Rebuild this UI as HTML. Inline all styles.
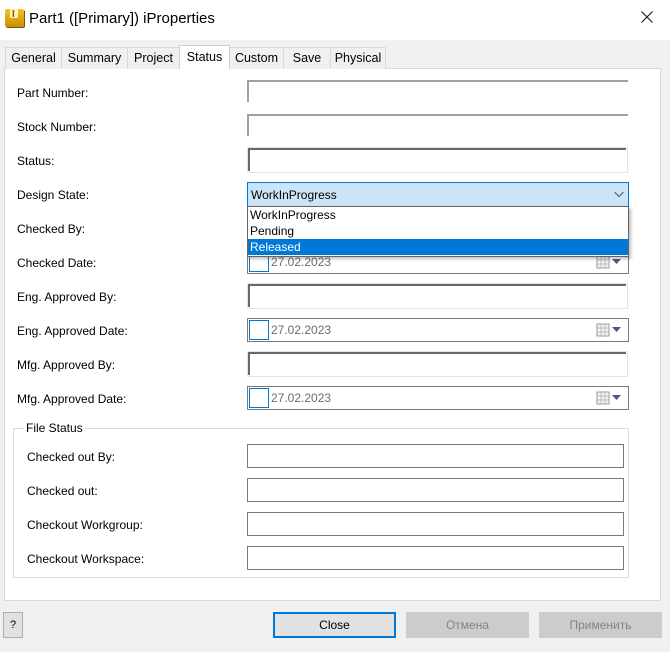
<!DOCTYPE html>
<html><head><meta charset="utf-8"><style>
*{box-sizing:border-box;margin:0;padding:0}
body{width:670px;height:652px;background:#f0f0f0;font-family:"Liberation Sans",sans-serif;font-size:12px;color:#000;position:relative;overflow:hidden}
.a{position:absolute}
.title{left:0;top:0;width:670px;height:40px;background:#fff}
.tab{top:47px;height:22px;border:1px solid #d9d9d9;border-bottom:none;background:#f0f0f0;text-align:center;line-height:21px;font-size:12.5px}
.sel{top:45px;height:24px;background:#fff;border-color:#d0d0d0;z-index:3;line-height:23px}
.panel{left:4px;top:68px;width:657px;height:533px;background:#fff;border:1px solid #d9d9d9}
.lbl{left:17px;font-size:12px}
.tl{left:247px;width:381px;height:22px;border-top:2px solid #a0a0a0;border-left:2px solid #a0a0a0}
.sunk{left:247px;width:381px;height:26px;border:1px solid #e3e3e3;background:#fff}
.sunk::before{content:"";position:absolute;left:0;top:0;right:1px;bottom:1px;border-top:2px solid #696969;border-left:2px solid #696969}
.date{left:247px;width:382px;height:24px;border:1px solid #7a7a7a;background:#fff}
.date .cb{position:absolute;left:1px;top:1px;width:20px;height:20px;border:1px solid #0078d7}
.date .t{position:absolute;left:23px;top:4px;color:#6d6d6d;font-size:12px}
.fs{left:247px;width:377px;height:24px;border:1px solid #7a7a7a;background:#fff}
.btn{top:612px;width:123px;height:26px;text-align:center;line-height:25px;font-size:12px;background:#cccccc;border:1px solid #cccccc;color:#838383}
</style></head><body>
<div class="a title"></div>
<div class="a" style="left:5px;top:9px;width:19px;height:18px;background:linear-gradient(#f2c230,#c89000);border-radius:2px;box-shadow:1px 1px 0 #7a5a00"></div>
<div class="a" style="left:10px;top:9px;width:8px;height:9px;background:#fff2b0;border-radius:1px"></div>
<div class="a" style="left:12px;top:9px;color:#7a5a00;font-weight:bold;font-size:10px">I</div>
<div class="a" style="left:29px;top:10px;font-size:15px">Part1 ([Primary]) iProperties</div>
<svg class="a" style="left:641px;top:11px" width="12" height="12"><path d="M0.5 0.5L11.5 11.5M11.5 0.5L0.5 11.5" stroke="#222" stroke-width="1.2"/></svg>

<div class="a panel"></div>
<div class="a tab" style="left:5px;width:57px">General</div>
<div class="a tab" style="left:61px;width:67px">Summary</div>
<div class="a tab" style="left:127px;width:53px">Project</div>
<div class="a tab sel" style="left:179px;width:51px">Status</div>
<div class="a tab" style="left:229px;width:55px">Custom</div>
<div class="a tab" style="left:283px;width:48px">Save</div>
<div class="a tab" style="left:330px;width:56px">Physical</div>

<div class="a lbl" style="top:86px">Part Number:</div>
<div class="a lbl" style="top:120px">Stock Number:</div>
<div class="a lbl" style="top:154px">Status:</div>
<div class="a lbl" style="top:188px">Design State:</div>
<div class="a lbl" style="top:222px">Checked By:</div>
<div class="a lbl" style="top:256px">Checked Date:</div>
<div class="a lbl" style="top:290px">Eng. Approved By:</div>
<div class="a lbl" style="top:324px">Eng. Approved Date:</div>
<div class="a lbl" style="top:358px">Mfg. Approved By:</div>
<div class="a lbl" style="top:392px">Mfg. Approved Date:</div>

<div class="a tl" style="top:80px"></div>
<div class="a tl" style="top:114px"></div>
<div class="a sunk" style="top:147px"></div>
<div class="a sunk" style="top:283px"></div>
<div class="a sunk" style="top:351px"></div>

<div class="a date" style="top:250px"><div class="cb"></div><div class="t">27.02.2023</div><svg class="a" style="left:348px;top:4px" width="30" height="14"><rect x="1" y="1" width="12" height="12" fill="#f4f4f4" stroke="#999"/><path d="M1 5H13M1 9H13M5 1V13M9 1V13" stroke="#bbb"/><path d="M16 4h9l-4.5 5z" fill="#4a5a7a"/></svg></div>
<div class="a date" style="top:318px"><div class="cb"></div><div class="t">27.02.2023</div><svg class="a" style="left:348px;top:4px" width="30" height="14"><rect x="1" y="1" width="12" height="12" fill="#f4f4f4" stroke="#999"/><path d="M1 5H13M1 9H13M5 1V13M9 1V13" stroke="#bbb"/><path d="M16 4h9l-4.5 5z" fill="#4a5a7a"/></svg></div>
<div class="a date" style="top:386px"><div class="cb"></div><div class="t">27.02.2023</div><svg class="a" style="left:348px;top:4px" width="30" height="14"><rect x="1" y="1" width="12" height="12" fill="#f4f4f4" stroke="#999"/><path d="M1 5H13M1 9H13M5 1V13M9 1V13" stroke="#bbb"/><path d="M16 4h9l-4.5 5z" fill="#4a5a7a"/></svg></div>

<div class="a" style="left:247px;top:182px;width:382px;height:25px;background:#cce4f7;border:1px solid #0078d7"><span class="a" style="left:3px;top:5px">WorkInProgress</span><svg class="a" style="left:366px;top:8px" width="10" height="7"><path d="M0.5 1L5 5.5L9.5 1" stroke="#555" fill="none"/></svg></div>
<div class="a" style="left:247px;top:206px;width:382px;height:51px;background:#fff;border:1px solid #646464;box-shadow:2px 2px 3px rgba(0,0,0,.25);z-index:5">
<div style="height:16px;padding-left:2px;line-height:16px">WorkInProgress</div>
<div style="height:16px;padding-left:2px;line-height:16px">Pending</div>
<div style="height:16px;padding-left:2px;line-height:16px;background:#0078d7;color:#fff">Released</div>
</div>

<div class="a" style="left:13px;top:428px;width:616px;height:150px;border:1px solid #dcdcdc"></div>
<div class="a" style="left:24px;top:421px;background:#fff;padding:0 2px">File Status</div>
<div class="a" style="left:27px;top:450px">Checked out By:</div>
<div class="a" style="left:27px;top:484px">Checked out:</div>
<div class="a" style="left:27px;top:518px">Checkout Workgroup:</div>
<div class="a" style="left:27px;top:552px">Checkout Workspace:</div>
<div class="a fs" style="top:444px"></div>
<div class="a fs" style="top:478px"></div>
<div class="a fs" style="top:512px"></div>
<div class="a fs" style="top:546px"></div>

<div class="a" style="left:3px;top:612px;width:20px;height:26px;border:1px solid #adadad;background:#e1e1e1;text-align:center;line-height:24px;font-size:11px">?</div>
<div class="a btn" style="left:273px;background:#e1e1e1;border:2px solid #0078d7;color:#000;line-height:23px">Close</div>
<div class="a btn" style="left:406px">Отмена</div>
<div class="a btn" style="left:539px">Применить</div>
</body></html>
